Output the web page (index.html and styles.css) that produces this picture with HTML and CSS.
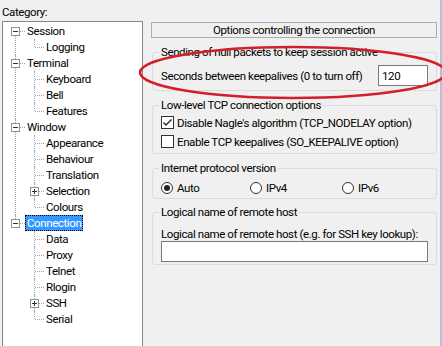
FILE: index.html
```html
<!DOCTYPE html>
<html lang="en">
<head>
    <meta charset="UTF-8">
    <title>PuTTY Configuration - Connection</title>
    <link rel="stylesheet" href="styles.css">
</head>
<body>
    <div class="dialog">
        <div class="category-pane">
            <div class="category-label">Category:</div>
            <div class="tree-box">
                <ul class="tree">
                    <li><span class="exp open"></span><span class="label">Session</span>
                        <ul>
                            <li><span class="label">Logging</span></li>
                        </ul>
                    </li>
                    <li><span class="exp open"></span><span class="label">Terminal</span>
                        <ul>
                            <li><span class="label">Keyboard</span></li>
                            <li><span class="label">Bell</span></li>
                            <li><span class="label">Features</span></li>
                        </ul>
                    </li>
                    <li><span class="exp open"></span><span class="label">Window</span>
                        <ul>
                            <li><span class="label">Appearance</span></li>
                            <li><span class="label">Behaviour</span></li>
                            <li><span class="label">Translation</span></li>
                            <li><span class="exp"></span><span class="label">Selection</span></li>
                            <li><span class="label">Colours</span></li>
                        </ul>
                    </li>
                    <li><span class="exp open"></span><span class="label selected">Connection</span>
                        <ul>
                            <li><span class="label">Data</span></li>
                            <li><span class="label">Proxy</span></li>
                            <li><span class="label">Telnet</span></li>
                            <li><span class="label">Rlogin</span></li>
                            <li><span class="exp"></span><span class="label">SSH</span></li>
                            <li><span class="label">Serial</span></li>
                        </ul>
                    </li>
                </ul>
            </div>
        </div>

        <div class="options-pane">
            <div class="panel-title">Options controlling the connection</div>

            <fieldset class="group group-keepalive">
                <legend>Sending of null packets to keep session active</legend>
                <div class="field-row">
                    <span>Seconds between keepalives (0 to turn off)</span>
                    <input type="text" class="input-small" value="120">
                </div>
            </fieldset>

            <fieldset class="group group-tcp">
                <legend>Low-level TCP connection options</legend>
                <div class="check-row">
                    <span class="checkbox">
                        <svg width="11" height="11" viewBox="0 0 11 11"><polyline points="1.5,5.5 4,8 9.5,2.5" fill="none" stroke="#222" stroke-width="1.4"/></svg>
                    </span>
                    <span>Disable Nagle's algorithm (TCP_NODELAY option)</span>
                </div>
                <div class="check-row">
                    <span class="checkbox"></span>
                    <span>Enable TCP keepalives (SO_KEEPALIVE option)</span>
                </div>
            </fieldset>

            <fieldset class="group group-ip">
                <legend>Internet protocol version</legend>
                <div class="radio-row">
                    <div class="radio-item"><span class="radio checked"></span><span>Auto</span></div>
                    <div class="radio-item"><span class="radio"></span><span>IPv4</span></div>
                    <div class="radio-item"><span class="radio"></span><span>IPv6</span></div>
                </div>
            </fieldset>

            <fieldset class="group group-host">
                <legend>Logical name of remote host</legend>
                <div class="field-label">Logical name of remote host (e.g. for SSH key lookup):</div>
                <input type="text" class="input-wide" value="">
            </fieldset>
        </div>
    </div>

    <!-- hand-drawn annotation -->
    <svg class="annotation" width="442" height="346" viewBox="0 0 442 346">
        <ellipse cx="293" cy="72.5" rx="153" ry="25.5" fill="none" stroke="#d2202b" stroke-width="2.6"/>
    </svg>
</body>
</html>
```
FILE: styles.css
```css
/* Base */
body {
    margin: 0;
    padding: 0;
    background-color: #f0f0f0;
    font-family: Roboto, "Liberation Sans", sans-serif;
    font-size: 11.5px;
    letter-spacing: -0.4px;
    color: #000;
    overflow: hidden;
}

.dialog {
    display: flex;
    width: 442px;
    height: 346px;
    box-sizing: border-box;
    border-right: 2px solid #b6c1d3;
}

/* Category tree */
.category-pane {
    width: 143px;
    flex-shrink: 0;
    padding-left: 2px;
    box-sizing: border-box;
}

.category-label {
    height: 21px;
    padding-top: 4px;
    line-height: 16px;
    box-sizing: border-box;
}

.tree-box {
    height: 340px;
    padding-top: 1px;
    background-color: #fff;
    border: 1px solid #828790;
    box-sizing: border-box;
}

.tree,
.tree ul {
    list-style: none;
    margin: 0;
    padding: 0;
}

.tree ul {
    margin-left: -3px;
}

.tree li {
    position: relative;
    padding-left: 22px;
}

.tree li::before {
    content: "";
    position: absolute;
    left: 12px;
    top: 0;
    bottom: 0;
    border-left: 1px dotted #a0a0a0;
}

.tree > li:first-child::before {
    top: 8px;
}

.tree li:last-child::before {
    bottom: auto;
    height: 8px;
}

.tree li::after {
    content: "";
    position: absolute;
    left: 13px;
    top: 8px;
    width: 9px;
    border-top: 1px dotted #a0a0a0;
}

.tree .label {
    display: block;
    width: max-content;
    height: 16px;
    line-height: 16px;
    padding: 0 2px;
}

.tree .label.selected {
    background-color: #3399ff;
    color: #fff;
    outline: 1px dotted #000;
    outline-offset: -1px;
}

.exp {
    position: absolute;
    left: 8px;
    top: 4px;
    width: 9px;
    height: 9px;
    box-sizing: border-box;
    border: 1px solid #919191;
    background-color: #fff;
    z-index: 1;
}

.exp::before {
    content: "";
    position: absolute;
    left: 1px;
    top: 3px;
    width: 5px;
    height: 1px;
    background-color: #333;
}

.exp:not(.open)::after {
    content: "";
    position: absolute;
    left: 3px;
    top: 1px;
    width: 1px;
    height: 5px;
    background-color: #333;
}

/* Options panel */
.options-pane {
    flex: 1;
    padding: 22px 3px 0 8px;
}

.panel-title {
    height: 16px;
    line-height: 14px;
    text-align: center;
    border: 1px solid #adadad;
    box-sizing: border-box;
}

.group {
    margin: 7px 0 0 1px;
    padding: 0 8px 4px 8px;
    border: 1px solid #dcdcdc;
    border-radius: 3px;
    min-width: 0;
}

.group legend {
    padding: 0 2px;
    margin-left: -2px;
    line-height: 14px;
}

.group-keepalive .field-row {
    display: flex;
    justify-content: space-between;
    align-items: center;
    padding-top: 6px;
}

.group-tcp {
    padding-top: 1px;
    padding-bottom: 2px;
}

.group-ip {
    padding-top: 3px;
    padding-bottom: 1px;
}

.group-host {
    margin-top: 6px;
    padding-bottom: 2px;
}

input[type="text"] {
    height: 21px;
    margin: 0;
    padding: 0 3px;
    box-sizing: border-box;
    border: 1px solid #7a7a7a;
    background-color: #fff;
    font: inherit;
    letter-spacing: inherit;
    color: #000;
    outline: none;
}

.input-small {
    width: 50px;
    flex-shrink: 0;
}

.input-wide {
    display: block;
    width: 100%;
}

.field-label {
    padding-top: 9px;
    line-height: 13px;
}

.check-row {
    display: flex;
    align-items: center;
    height: 19px;
}

.checkbox {
    width: 13px;
    height: 13px;
    margin-right: 3px;
    box-sizing: border-box;
    border: 1px solid #333;
    background-color: #fff;
    display: flex;
    align-items: center;
    justify-content: center;
}

.radio-row {
    display: grid;
    grid-template-columns: 89px 92px 1fr;
    height: 19px;
}

.radio-item {
    display: flex;
    align-items: center;
}

.radio {
    position: relative;
    width: 12px;
    height: 12px;
    margin-right: 4px;
    box-sizing: border-box;
    border: 1px solid #333;
    border-radius: 50%;
    background-color: #fff;
}

.radio.checked::after {
    content: "";
    position: absolute;
    left: 2px;
    top: 2px;
    width: 6px;
    height: 6px;
    border-radius: 50%;
    background-color: #222;
}

/* Red annotation drawn over the dialog */
.annotation {
    position: absolute;
    left: 0;
    top: 0;
    pointer-events: none;
}
```
